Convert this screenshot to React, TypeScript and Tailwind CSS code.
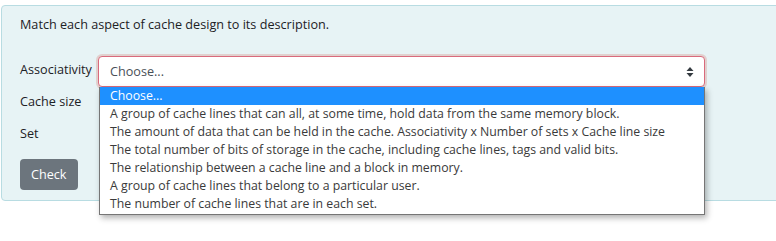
const options = [
  "Choose...",
  "A group of cache lines that can all, at some time, hold data from the same memory block.",
  "The amount of data that can be held in the cache. Associativity x Number of sets x Cache line size",
  "The total number of bits of storage in the cache, including cache lines, tags and valid bits.",
  "The relationship between a cache line and a block in memory.",
  "A group of cache lines that belong to a particular user.",
  "The number of cache lines that are in each set.",
];

function SortIcon() {
  return (
    <svg width="8" height="12" viewBox="0 0 8 12" className="text-[#343a40]">
      <path d="M4 1 L7.5 5 H0.5 Z" fill="currentColor" />
      <path d="M4 11 L7.5 7 H0.5 Z" fill="currentColor" />
    </svg>
  );
}

export default function App() {
  return (
    <div
      className="w-[776px] h-[241px] overflow-hidden bg-white text-[#1d2125]"
      style={{ fontFamily: '"Open Sans", "Noto Sans", sans-serif' }}
    >
      <div className="mt-[5px] ml-px w-[800px] h-[196px] rounded-[4px] border border-[#b8dce2] bg-[#e7f3f5] pl-[18px] pt-[9px] text-[12.65px]">
        <p className="leading-[18px]">Match each aspect of cache design to its description.</p>

        <div className="mt-[23px] flex flex-col">
          <div className="flex h-[32px] items-start">
            <span className="w-[78px] pt-[4px] leading-[18px]">Associativity</span>
            <div className="relative">
              <div className="flex h-[31px] w-[607px] items-center justify-between rounded-[4px] border border-[#d96a7c] bg-white pl-[11px] pr-[10px] shadow-[0_0_0_2px_rgba(202,49,32,0.18)]">
                <span className="text-[#495057]">Choose...</span>
                <SortIcon />
              </div>
              {/* open dropdown */}
              <ul className="absolute left-[1px] top-[31px] z-10 w-[606px] border-x border-b border-[#767676] bg-white pb-[1px] text-[12.3px] leading-[18px] shadow-[2px_3px_6px_rgba(0,0,0,0.3)]">
                {options.map((o, i) => (
                  <li
                    key={o}
                    className={
                      i === 0
                        ? "bg-[#1e90ff] px-[10px] text-white"
                        : "whitespace-nowrap px-[10px] text-[#3a3a3a]"
                    }
                  >
                    {o}
                  </li>
                ))}
              </ul>
            </div>
          </div>
          <div className="h-[32px] pt-[4px] leading-[18px]">Cache size</div>
          <div className="h-[32px] pt-[4px] leading-[18px]">Set</div>
        </div>

        <button className="mt-[7px] h-[31px] rounded-[4px] bg-[#6c757d] px-[11px] text-white">
          Check
        </button>
      </div>
    </div>
  );
}
